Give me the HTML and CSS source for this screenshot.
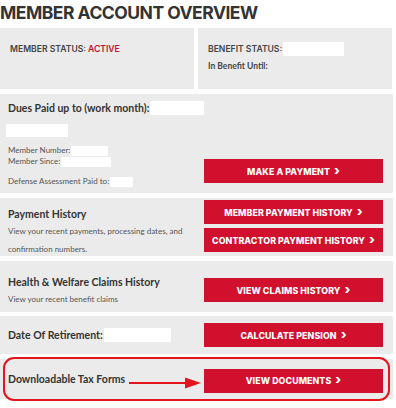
FILE: index.html
```html
<!DOCTYPE html>
<html lang="en">
<head>
  <meta charset="UTF-8" />
  <title>Member Account Overview</title>
  <link rel="stylesheet" href="styles.css">
</head>
<body>
  <div class="page">
    <h1 class="title">MEMBER ACCOUNT OVERVIEW</h1>

    <!-- Status -->
    <div class="status-row">
      <div class="card status">
        <p class="caps">MEMBER STATUS: <span class="active">ACTIVE</span></p>
      </div>
      <div class="card status">
        <p class="caps">BENEFIT STATUS:<span class="blank" style="width:61px"></span></p>
        <p class="until">In Benefit Until:</p>
      </div>
    </div>

    <!-- Dues -->
    <div class="card row dues">
      <div class="info">
        <h2>Dues Paid up to (work month):<span class="blank" style="width:59px"></span></h2>
        <div class="blank block" style="width:62px"></div>
        <p class="small">Member Number:<span class="blank" style="width:37px"></span></p>
        <p class="small">Member Since:<span class="blank" style="width:50px"></span></p>
        <p class="small gap">Defense Assessment Paid to:<span class="blank" style="width:23px"></span></p>
      </div>
      <div class="actions">
        <a href="#" class="btn">MAKE A PAYMENT <span class="chev">&#x203A;</span></a>
      </div>
    </div>

    <!-- Payment history -->
    <div class="card row history">
      <div class="info">
        <h2>Payment History</h2>
        <p class="desc">View your recent payments, processing dates, and confirmation numbers.</p>
      </div>
      <div class="actions">
        <a href="#" class="btn">MEMBER PAYMENT HISTORY <span class="chev">&#x203A;</span></a>
        <a href="#" class="btn">CONTRACTOR PAYMENT HISTORY <span class="chev">&#x203A;</span></a>
      </div>
    </div>

    <!-- Claims -->
    <div class="card row claims">
      <div class="info">
        <h2>Health &amp; Welfare Claims History</h2>
        <p class="desc">View your recent benefit claims</p>
      </div>
      <div class="actions">
        <a href="#" class="btn">VIEW CLAIMS HISTORY <span class="chev">&#x203A;</span></a>
      </div>
    </div>

    <!-- Retirement -->
    <div class="card row retire">
      <div class="info">
        <h2>Date Of Retirement:<span class="blank" style="width:67px"></span></h2>
      </div>
      <div class="actions">
        <a href="#" class="btn">CALCULATE PENSION <span class="chev">&#x203A;</span></a>
      </div>
    </div>

    <!-- Tax forms -->
    <div class="card row tax">
      <div class="info">
        <h2>Downloadable Tax Forms</h2>
      </div>
      <div class="actions">
        <a href="#" class="btn">VIEW DOCUMENTS <span class="chev">&#x203A;</span></a>
      </div>
      <div class="highlight"></div>
      <svg class="arrow" width="72" height="12" viewBox="0 0 72 12">
        <line x1="0" y1="6" x2="58" y2="6" stroke="#e3141b" stroke-width="2" />
        <polygon points="56,0.5 72,6 56,11.5" fill="#e3141b" />
      </svg>
    </div>
  </div>
</body>
</html>
```

FILE: styles.css
```css
* {
  box-sizing: border-box;
  margin: 0;
  padding: 0;
}
body {
  background: #fff;
  font-family: Lato, "Open Sans", sans-serif;
  color: #3a3a3a;
}
.page {
  width: 393px;
}
.title {
  font-family: Inter, "Liberation Sans", sans-serif;
  font-weight: 700;
  font-size: 17.5px;
  letter-spacing: -0.5px;
  color: #333;
  height: 28px;
  padding: 3px 0 0 0;
  line-height: 20px;
}
.card {
  background: #ebebeb;
}
.status-row {
  display: grid;
  grid-template-columns: 194px 194px;
  gap: 4px;
  height: 61px;
  margin-bottom: 5px;
}
.status {
  padding: 13px 10px 0 10px;
}
.caps {
  font-family: Inter, "Liberation Sans", sans-serif;
  font-weight: 600;
  font-size: 8.6px;
  color: #444;
  display: flex;
  align-items: center;
  height: 15px;
}
.active {
  color: #c8102e;
  margin-left: 2px;
}
.until {
  font-weight: 700;
  font-size: 8.5px;
  color: #444;
  margin-top: 5px;
}
.blank {
  display: inline-block;
  background: #fff;
  height: 14px;
  vertical-align: middle;
  margin-left: 1px;
}
.blank.block {
  display: block;
  height: 13px;
  margin: 9px 0 0 -2px;
}
.row {
  display: flex;
  position: relative;
  margin-bottom: 5px;
}
.info {
  width: 204px;
  padding-left: 8px;
}
.actions {
  width: 179px;
  display: flex;
  flex-direction: column;
  gap: 5px;
}
h2 {
  font-size: 10.5px;
  font-weight: 700;
  color: #333;
  display: flex;
  align-items: center;
  white-space: nowrap;
}
.small {
  font-size: 8px;
  color: #555;
  line-height: 11px;
  display: flex;
  align-items: center;
}
.small .blank {
  height: 10px;
}
.small.gap {
  margin-top: 9px;
}
.desc {
  font-size: 8px;
  color: #555;
  line-height: 18px;
  margin-top: 2px;
}
.btn {
  display: flex;
  align-items: center;
  justify-content: center;
  height: 24px;
  background: #d0102c;
  color: #fff;
  text-decoration: none;
  font-family: Inter, "Liberation Sans", sans-serif;
  font-weight: 800;
  font-size: 8.8px;
  letter-spacing: 0.1px;
}
.chev {
  font-size: 13px;
  margin-left: 4px;
  line-height: 1;
  margin-top: -2px;
}
.dues {
  height: 99px;
  padding-top: 7px;
}
.dues h2 {
  height: 14px;
}
.dues .small:first-of-type {
  margin-top: 8px;
}
.dues .actions {
  justify-content: flex-end;
  padding-bottom: 10px;
}
.history {
  height: 58px;
  padding-top: 2px;
}
.history h2 {
  margin-top: 8px;
}
.history .actions {
  gap: 4px;
}
.claims {
  height: 51px;
  margin-bottom: 4px;
}
.claims h2 {
  margin-top: 15px;
}
.claims .desc {
  margin-top: 2px;
}
.claims .actions {
  padding-top: 17px;
}
.retire {
  height: 38px;
  align-items: center;
}
.tax {
  height: 40px;
  align-items: center;
  margin-top: 0;
}
.tax .actions {
  margin-top: 3px;
}
.highlight {
  position: absolute;
  left: 3px;
  top: -2px;
  width: 387px;
  height: 44px;
  border: 2px solid #e3141b;
  border-radius: 11px;
}
.arrow {
  position: absolute;
  left: 129px;
  top: 18px;
}
```
